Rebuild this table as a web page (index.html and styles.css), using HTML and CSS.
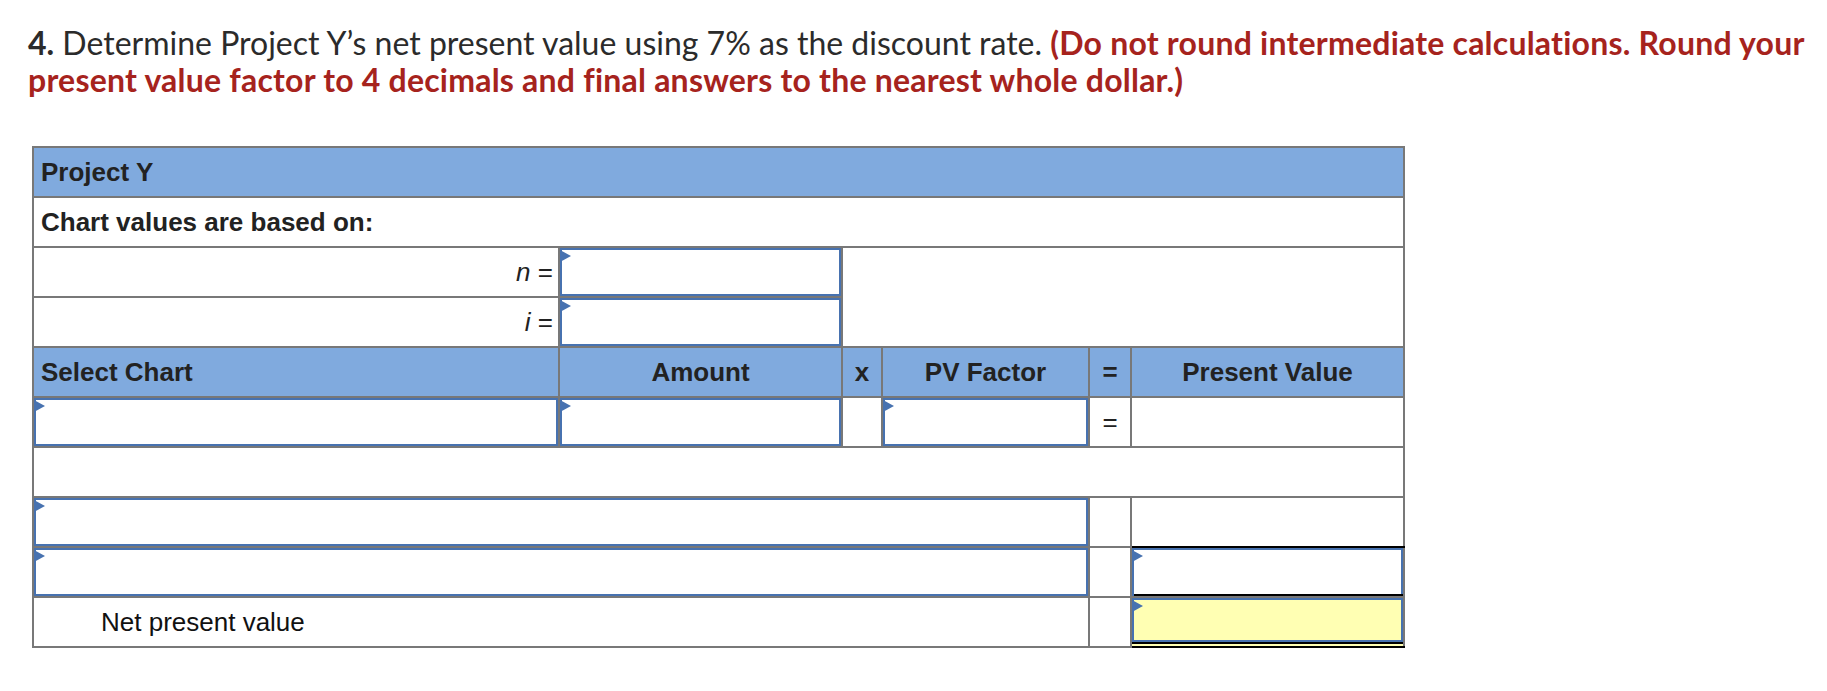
FILE: index.html
```html
<!DOCTYPE html>
<html lang="en">
<head>
<meta charset="utf-8">
<title>Project Y NPV</title>
<link rel="stylesheet" href="styles.css">
</head>
<body>
<div class="page">
  <p class="q"><b class="num">4.</b> Determine Project Y’s net present value using 7% as the discount rate. <b class="red">(Do not round intermediate calculations. Round your<br>present value factor to 4 decimals and final answers to the nearest whole dollar.)</b></p>

  <div class="sheet">
    <div class="c h span6">Project Y</div>
    <div class="c b span6">Chart values are based on:</div>

    <div class="c right"><i>n</i>&nbsp;=</div>
    <div class="c inp"></div>
    <div class="c rs"></div>

    <div class="c right"><i>i</i>&nbsp;=</div>
    <div class="c inp"></div>

    <div class="c h">Select Chart</div>
    <div class="c h center">Amount</div>
    <div class="c h center">x</div>
    <div class="c h center">PV Factor</div>
    <div class="c h center">=</div>
    <div class="c h center">Present Value</div>

    <div class="c inp"></div>
    <div class="c inp"></div>
    <div class="c"></div>
    <div class="c inp"></div>
    <div class="c center">=</div>
    <div class="c"></div>

    <div class="c span6"></div>

    <div class="c inp span4"></div>
    <div class="c"></div>
    <div class="c blk"></div>

    <div class="c inp span4"></div>
    <div class="c"></div>
    <div class="c inp blk"></div>

    <div class="c span4 npv-label">Net present value</div>
    <div class="c"></div>
    <div class="npv blk">
      <div class="inp yel"></div>
      <div class="dbl"></div>
    </div>
  </div>
</div>
</body>
</html>
```

FILE: styles.css
```css
body {
  margin: 0;
  background: #ffffff;
}

.page {
  padding: 24px 0 0 28px;
}

.q {
  margin: 0;
  font-family: Lato, "Open Sans", sans-serif;
  font-size: 32px;
  line-height: 37px;
  color: #2b2b2b;
  white-space: nowrap;
}

.q .num {
  font-weight: 700;
}

.q .red {
  color: #a6231d;
  font-weight: 700;
  letter-spacing: 0.22px;
}

.sheet {
  margin: 48px 0 0 4px;
  display: grid;
  grid-template-columns: 524px 281px 38px 205px 40px 271px;
  grid-template-rows: repeat(10, 48px);
  gap: 2px;
  padding: 2px;
  width: max-content;
  background: #787878;
  font-family: "Liberation Sans", Arial, sans-serif;
  font-size: 26px;
  color: #222222;
}

.c {
  background: #ffffff;
  display: flex;
  align-items: center;
  padding: 0 7px;
  box-sizing: border-box;
  min-width: 0;
}

.h {
  background: #80aade;
  font-weight: 700;
}

.b {
  font-weight: 700;
}

.center {
  justify-content: center;
  padding: 0;
}

.right {
  justify-content: flex-end;
  padding-right: 5px;
}

.span6 {
  grid-column: 1 / -1;
}

.span4 {
  grid-column: 1 / 5;
}

.rs {
  grid-column: 3 / 7;
  grid-row: 3 / 5;
}

.inp {
  position: relative;
  background: #ffffff;
  border: 2px solid #4772b0;
  box-sizing: border-box;
}

.inp::before {
  content: "";
  position: absolute;
  left: -2px;
  top: 0;
  border-left: 11px solid #4772b0;
  border-top: 6.5px solid transparent;
  border-bottom: 6.5px solid transparent;
}

.blk {
  position: relative;
}

.blk::after {
  content: "";
  position: absolute;
  left: 0;
  right: -2px;
  bottom: -2px;
  height: 2px;
  background: #000000;
}

.npv-label {
  padding-left: 67px;
  color: #111111;
}

.npv {
  display: flex;
  flex-direction: column;
  background: #ffffb3;
}

.npv .yel {
  flex: 1;
  background: #ffffb3;
}

.npv .dbl {
  border-top: 2px solid #000000;
  height: 2px;
}
```
